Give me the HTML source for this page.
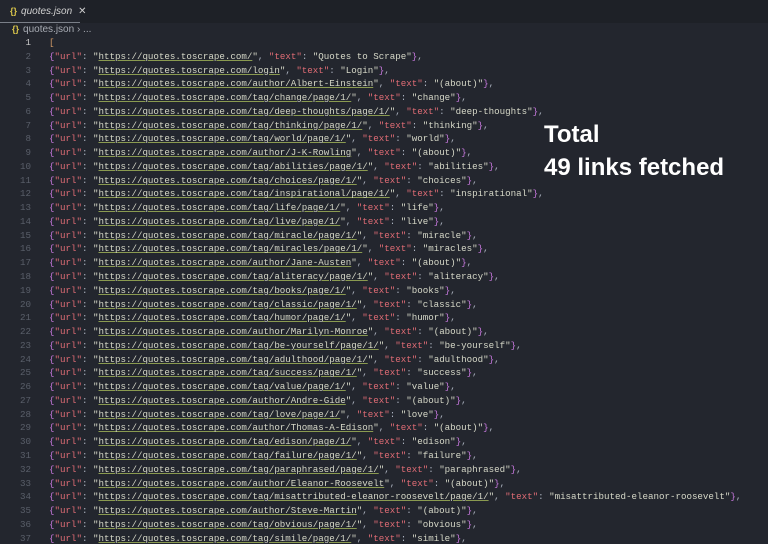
<!DOCTYPE html>
<html><head><meta charset="utf-8"><style>
*{margin:0;padding:0;box-sizing:border-box}
html,body{width:768px;height:544px;overflow:hidden}
body{background:#23262e;font-family:"Liberation Sans",sans-serif;position:relative}
#tabs{position:absolute;left:0;top:0;width:768px;height:23px;background:#1e2127}
#tab{position:absolute;left:0;top:0;width:80px;height:23px;background:#23262e;border-bottom:1px solid #7a7f88;color:#d0d0d0;font-size:10px;font-style:italic;line-height:22px;padding-left:10px}
#tab b{color:#d7c34a;font-style:normal;font-weight:bold;font-size:9px;margin-right:4px}
#tab i{font-style:normal;margin-left:6px;color:#ccc}
#crumb{position:absolute;left:12px;top:23px;height:14px;font-size:10px;color:#a8acb4;line-height:13px}
#crumb b{color:#d7c34a;font-size:9px;margin-right:4px}
#code{position:absolute;left:0;top:36px;width:768px;font-family:"Liberation Mono",monospace;font-size:9.17px;line-height:13.77px}
.l{height:13.77px;position:relative}
.n{position:absolute;left:0;width:31px;text-align:right;color:#5a5f6a}
.c{position:absolute;left:49px;color:#abb2bf;white-space:pre}
.b{color:#c678dd}.k{color:#e06c75}.s{color:#d6d8c8}
.u{color:#d6d8c8;text-decoration:underline;text-decoration-color:#8a9a50}
#tot{position:absolute;left:544px;top:118px;color:#fff;font-weight:bold;font-size:24px;line-height:33px}
</style></head><body>
<div id="tabs"><div id="tab"><b>{}</b>quotes.json<i>✕</i></div></div>
<div id="crumb"><b>{}</b>quotes.json › ...</div>
<div id="code"><div class="l"><span class="n" style="color:#c8c8c8">1</span><span class="c"><span style="color:#d19a66">[</span></span></div><div class="l"><span class="n">2</span><span class="c"><span class="b">{</span><span class="k">"url"</span>: <span class="s">"</span><span class="u">https://quotes.toscrape.com/</span><span class="s">"</span>, <span class="k">"text"</span>: <span class="s">"Quotes to Scrape"</span><span class="b">}</span>,</span></div><div class="l"><span class="n">3</span><span class="c"><span class="b">{</span><span class="k">"url"</span>: <span class="s">"</span><span class="u">https://quotes.toscrape.com/login</span><span class="s">"</span>, <span class="k">"text"</span>: <span class="s">"Login"</span><span class="b">}</span>,</span></div><div class="l"><span class="n">4</span><span class="c"><span class="b">{</span><span class="k">"url"</span>: <span class="s">"</span><span class="u">https://quotes.toscrape.com/author/Albert-Einstein</span><span class="s">"</span>, <span class="k">"text"</span>: <span class="s">"(about)"</span><span class="b">}</span>,</span></div><div class="l"><span class="n">5</span><span class="c"><span class="b">{</span><span class="k">"url"</span>: <span class="s">"</span><span class="u">https://quotes.toscrape.com/tag/change/page/1/</span><span class="s">"</span>, <span class="k">"text"</span>: <span class="s">"change"</span><span class="b">}</span>,</span></div><div class="l"><span class="n">6</span><span class="c"><span class="b">{</span><span class="k">"url"</span>: <span class="s">"</span><span class="u">https://quotes.toscrape.com/tag/deep-thoughts/page/1/</span><span class="s">"</span>, <span class="k">"text"</span>: <span class="s">"deep-thoughts"</span><span class="b">}</span>,</span></div><div class="l"><span class="n">7</span><span class="c"><span class="b">{</span><span class="k">"url"</span>: <span class="s">"</span><span class="u">https://quotes.toscrape.com/tag/thinking/page/1/</span><span class="s">"</span>, <span class="k">"text"</span>: <span class="s">"thinking"</span><span class="b">}</span>,</span></div><div class="l"><span class="n">8</span><span class="c"><span class="b">{</span><span class="k">"url"</span>: <span class="s">"</span><span class="u">https://quotes.toscrape.com/tag/world/page/1/</span><span class="s">"</span>, <span class="k">"text"</span>: <span class="s">"world"</span><span class="b">}</span>,</span></div><div class="l"><span class="n">9</span><span class="c"><span class="b">{</span><span class="k">"url"</span>: <span class="s">"</span><span class="u">https://quotes.toscrape.com/author/J-K-Rowling</span><span class="s">"</span>, <span class="k">"text"</span>: <span class="s">"(about)"</span><span class="b">}</span>,</span></div><div class="l"><span class="n">10</span><span class="c"><span class="b">{</span><span class="k">"url"</span>: <span class="s">"</span><span class="u">https://quotes.toscrape.com/tag/abilities/page/1/</span><span class="s">"</span>, <span class="k">"text"</span>: <span class="s">"abilities"</span><span class="b">}</span>,</span></div><div class="l"><span class="n">11</span><span class="c"><span class="b">{</span><span class="k">"url"</span>: <span class="s">"</span><span class="u">https://quotes.toscrape.com/tag/choices/page/1/</span><span class="s">"</span>, <span class="k">"text"</span>: <span class="s">"choices"</span><span class="b">}</span>,</span></div><div class="l"><span class="n">12</span><span class="c"><span class="b">{</span><span class="k">"url"</span>: <span class="s">"</span><span class="u">https://quotes.toscrape.com/tag/inspirational/page/1/</span><span class="s">"</span>, <span class="k">"text"</span>: <span class="s">"inspirational"</span><span class="b">}</span>,</span></div><div class="l"><span class="n">13</span><span class="c"><span class="b">{</span><span class="k">"url"</span>: <span class="s">"</span><span class="u">https://quotes.toscrape.com/tag/life/page/1/</span><span class="s">"</span>, <span class="k">"text"</span>: <span class="s">"life"</span><span class="b">}</span>,</span></div><div class="l"><span class="n">14</span><span class="c"><span class="b">{</span><span class="k">"url"</span>: <span class="s">"</span><span class="u">https://quotes.toscrape.com/tag/live/page/1/</span><span class="s">"</span>, <span class="k">"text"</span>: <span class="s">"live"</span><span class="b">}</span>,</span></div><div class="l"><span class="n">15</span><span class="c"><span class="b">{</span><span class="k">"url"</span>: <span class="s">"</span><span class="u">https://quotes.toscrape.com/tag/miracle/page/1/</span><span class="s">"</span>, <span class="k">"text"</span>: <span class="s">"miracle"</span><span class="b">}</span>,</span></div><div class="l"><span class="n">16</span><span class="c"><span class="b">{</span><span class="k">"url"</span>: <span class="s">"</span><span class="u">https://quotes.toscrape.com/tag/miracles/page/1/</span><span class="s">"</span>, <span class="k">"text"</span>: <span class="s">"miracles"</span><span class="b">}</span>,</span></div><div class="l"><span class="n">17</span><span class="c"><span class="b">{</span><span class="k">"url"</span>: <span class="s">"</span><span class="u">https://quotes.toscrape.com/author/Jane-Austen</span><span class="s">"</span>, <span class="k">"text"</span>: <span class="s">"(about)"</span><span class="b">}</span>,</span></div><div class="l"><span class="n">18</span><span class="c"><span class="b">{</span><span class="k">"url"</span>: <span class="s">"</span><span class="u">https://quotes.toscrape.com/tag/aliteracy/page/1/</span><span class="s">"</span>, <span class="k">"text"</span>: <span class="s">"aliteracy"</span><span class="b">}</span>,</span></div><div class="l"><span class="n">19</span><span class="c"><span class="b">{</span><span class="k">"url"</span>: <span class="s">"</span><span class="u">https://quotes.toscrape.com/tag/books/page/1/</span><span class="s">"</span>, <span class="k">"text"</span>: <span class="s">"books"</span><span class="b">}</span>,</span></div><div class="l"><span class="n">20</span><span class="c"><span class="b">{</span><span class="k">"url"</span>: <span class="s">"</span><span class="u">https://quotes.toscrape.com/tag/classic/page/1/</span><span class="s">"</span>, <span class="k">"text"</span>: <span class="s">"classic"</span><span class="b">}</span>,</span></div><div class="l"><span class="n">21</span><span class="c"><span class="b">{</span><span class="k">"url"</span>: <span class="s">"</span><span class="u">https://quotes.toscrape.com/tag/humor/page/1/</span><span class="s">"</span>, <span class="k">"text"</span>: <span class="s">"humor"</span><span class="b">}</span>,</span></div><div class="l"><span class="n">22</span><span class="c"><span class="b">{</span><span class="k">"url"</span>: <span class="s">"</span><span class="u">https://quotes.toscrape.com/author/Marilyn-Monroe</span><span class="s">"</span>, <span class="k">"text"</span>: <span class="s">"(about)"</span><span class="b">}</span>,</span></div><div class="l"><span class="n">23</span><span class="c"><span class="b">{</span><span class="k">"url"</span>: <span class="s">"</span><span class="u">https://quotes.toscrape.com/tag/be-yourself/page/1/</span><span class="s">"</span>, <span class="k">"text"</span>: <span class="s">"be-yourself"</span><span class="b">}</span>,</span></div><div class="l"><span class="n">24</span><span class="c"><span class="b">{</span><span class="k">"url"</span>: <span class="s">"</span><span class="u">https://quotes.toscrape.com/tag/adulthood/page/1/</span><span class="s">"</span>, <span class="k">"text"</span>: <span class="s">"adulthood"</span><span class="b">}</span>,</span></div><div class="l"><span class="n">25</span><span class="c"><span class="b">{</span><span class="k">"url"</span>: <span class="s">"</span><span class="u">https://quotes.toscrape.com/tag/success/page/1/</span><span class="s">"</span>, <span class="k">"text"</span>: <span class="s">"success"</span><span class="b">}</span>,</span></div><div class="l"><span class="n">26</span><span class="c"><span class="b">{</span><span class="k">"url"</span>: <span class="s">"</span><span class="u">https://quotes.toscrape.com/tag/value/page/1/</span><span class="s">"</span>, <span class="k">"text"</span>: <span class="s">"value"</span><span class="b">}</span>,</span></div><div class="l"><span class="n">27</span><span class="c"><span class="b">{</span><span class="k">"url"</span>: <span class="s">"</span><span class="u">https://quotes.toscrape.com/author/Andre-Gide</span><span class="s">"</span>, <span class="k">"text"</span>: <span class="s">"(about)"</span><span class="b">}</span>,</span></div><div class="l"><span class="n">28</span><span class="c"><span class="b">{</span><span class="k">"url"</span>: <span class="s">"</span><span class="u">https://quotes.toscrape.com/tag/love/page/1/</span><span class="s">"</span>, <span class="k">"text"</span>: <span class="s">"love"</span><span class="b">}</span>,</span></div><div class="l"><span class="n">29</span><span class="c"><span class="b">{</span><span class="k">"url"</span>: <span class="s">"</span><span class="u">https://quotes.toscrape.com/author/Thomas-A-Edison</span><span class="s">"</span>, <span class="k">"text"</span>: <span class="s">"(about)"</span><span class="b">}</span>,</span></div><div class="l"><span class="n">30</span><span class="c"><span class="b">{</span><span class="k">"url"</span>: <span class="s">"</span><span class="u">https://quotes.toscrape.com/tag/edison/page/1/</span><span class="s">"</span>, <span class="k">"text"</span>: <span class="s">"edison"</span><span class="b">}</span>,</span></div><div class="l"><span class="n">31</span><span class="c"><span class="b">{</span><span class="k">"url"</span>: <span class="s">"</span><span class="u">https://quotes.toscrape.com/tag/failure/page/1/</span><span class="s">"</span>, <span class="k">"text"</span>: <span class="s">"failure"</span><span class="b">}</span>,</span></div><div class="l"><span class="n">32</span><span class="c"><span class="b">{</span><span class="k">"url"</span>: <span class="s">"</span><span class="u">https://quotes.toscrape.com/tag/paraphrased/page/1/</span><span class="s">"</span>, <span class="k">"text"</span>: <span class="s">"paraphrased"</span><span class="b">}</span>,</span></div><div class="l"><span class="n">33</span><span class="c"><span class="b">{</span><span class="k">"url"</span>: <span class="s">"</span><span class="u">https://quotes.toscrape.com/author/Eleanor-Roosevelt</span><span class="s">"</span>, <span class="k">"text"</span>: <span class="s">"(about)"</span><span class="b">}</span>,</span></div><div class="l"><span class="n">34</span><span class="c"><span class="b">{</span><span class="k">"url"</span>: <span class="s">"</span><span class="u">https://quotes.toscrape.com/tag/misattributed-eleanor-roosevelt/page/1/</span><span class="s">"</span>, <span class="k">"text"</span>: <span class="s">"misattributed-eleanor-roosevelt"</span><span class="b">}</span>,</span></div><div class="l"><span class="n">35</span><span class="c"><span class="b">{</span><span class="k">"url"</span>: <span class="s">"</span><span class="u">https://quotes.toscrape.com/author/Steve-Martin</span><span class="s">"</span>, <span class="k">"text"</span>: <span class="s">"(about)"</span><span class="b">}</span>,</span></div><div class="l"><span class="n">36</span><span class="c"><span class="b">{</span><span class="k">"url"</span>: <span class="s">"</span><span class="u">https://quotes.toscrape.com/tag/obvious/page/1/</span><span class="s">"</span>, <span class="k">"text"</span>: <span class="s">"obvious"</span><span class="b">}</span>,</span></div><div class="l"><span class="n">37</span><span class="c"><span class="b">{</span><span class="k">"url"</span>: <span class="s">"</span><span class="u">https://quotes.toscrape.com/tag/simile/page/1/</span><span class="s">"</span>, <span class="k">"text"</span>: <span class="s">"simile"</span><span class="b">}</span>,</span></div></div>
<div id="tot">Total<br>49 links fetched</div>
</body></html>
